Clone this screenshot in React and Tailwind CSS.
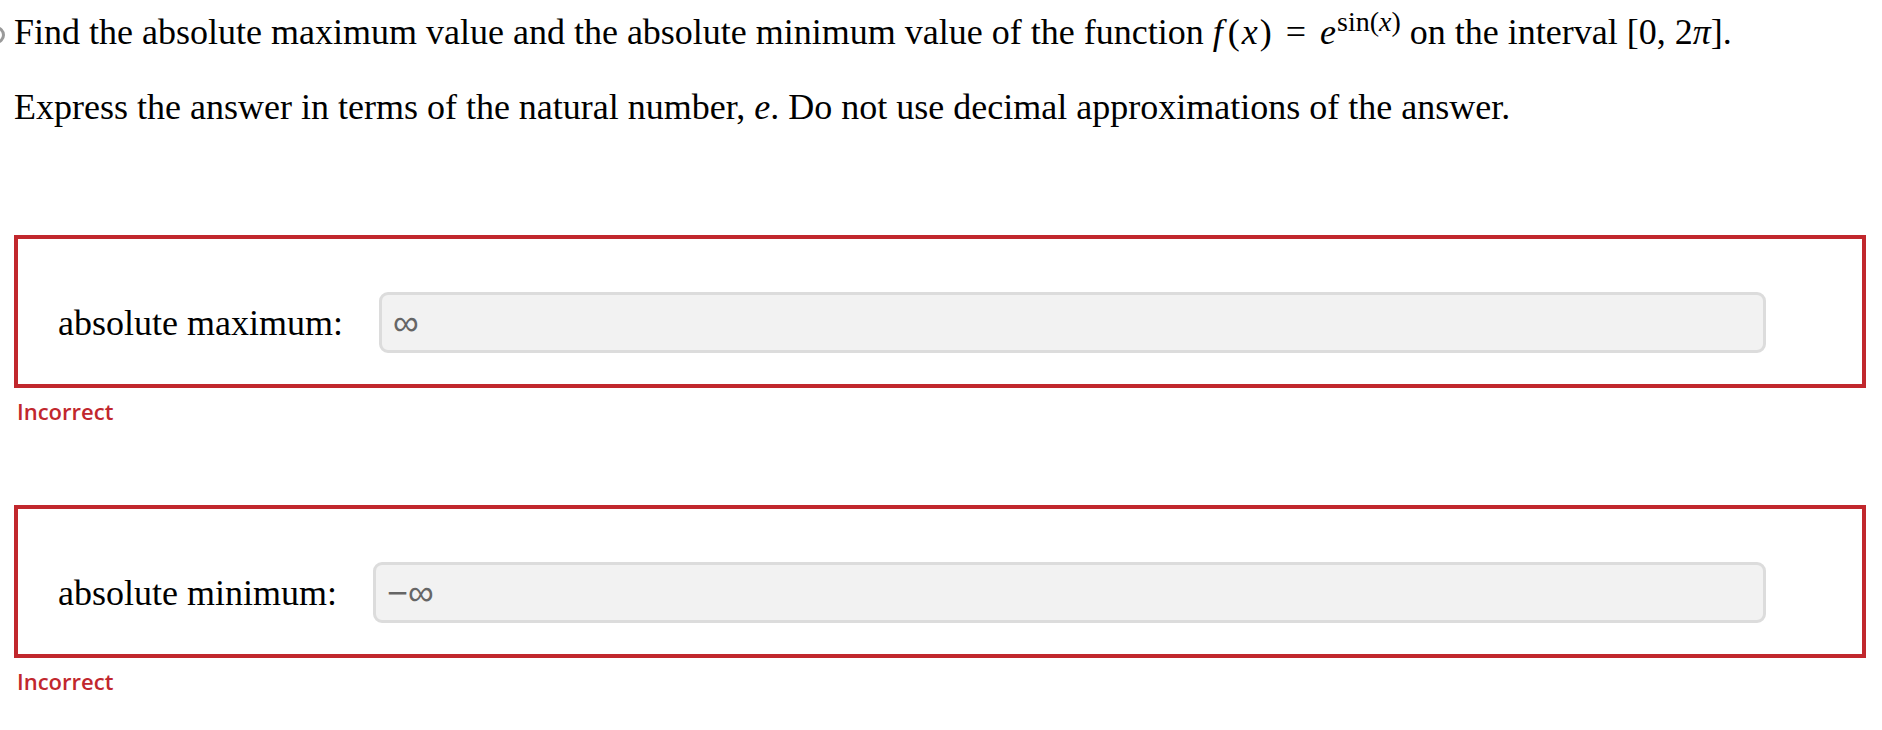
import React from "react";

function AnswerBox({ label, value, className = "" }) {
  return (
    <div className={className}>
      <div className="border-[4px] border-[#c1272d] pt-[53px] pb-[31px] pl-[40px] pr-[96px]">
        <div className="flex items-center gap-[36px]">
          <div className="font-['Liberation_Serif',serif] text-[36px] leading-[40px] text-black whitespace-nowrap">
            {label}
          </div>
          <div className="flex-1 h-[61px] rounded-[9px] border-[3px] border-[#dcdcdc] bg-[#f2f2f2] flex items-center pl-[11px] font-['Liberation_Sans',sans-serif] text-[36px] text-[#666666]">
            {value}
          </div>
        </div>
      </div>
      <div className="mt-[8px] ml-[3px] font-['Open_Sans',sans-serif] font-semibold text-[22px] leading-[30px] text-[#c1272d]">
        Incorrect
      </div>
    </div>
  );
}

export default function App() {
  return (
    <div className="w-[1882px] min-h-[730px] bg-white overflow-hidden">
      <div className="pl-[14px] pt-[12px] font-['Liberation_Serif',serif] text-[36px] leading-[40px] text-black">
        <p className="relative whitespace-nowrap">
          <span className="absolute left-[-27px] top-[14px] w-[18px] h-[18px] rounded-full border-[3px] border-[#9a9a9a]"></span>
          Find the absolute maximum value and the absolute minimum value of the function{" "}
          <span className="italic mr-[5px]">f</span>(<span className="italic mx-[2px]">x</span>)
          <span className="mx-[14px]">=</span>
          <span className="italic">e</span>
          <sup className="text-[28px] top-[-13px] ml-[1px]">
            sin(<span className="italic">x</span>)
          </sup>{" "}
          on the interval [0, 2<span className="italic">π</span>].
        </p>
        <p className="mt-[35px] whitespace-nowrap">
          Express the answer in terms of the natural number, <span className="italic">e</span>. Do not use decimal
          approximations of the answer.
        </p>
      </div>

      <div className="pl-[14px] pr-[16px] mt-[108px]">
        <AnswerBox label="absolute maximum:" value="∞" />
        <AnswerBox label="absolute minimum:" value="−∞" className="mt-[79px]" />
      </div>
    </div>
  );
}
